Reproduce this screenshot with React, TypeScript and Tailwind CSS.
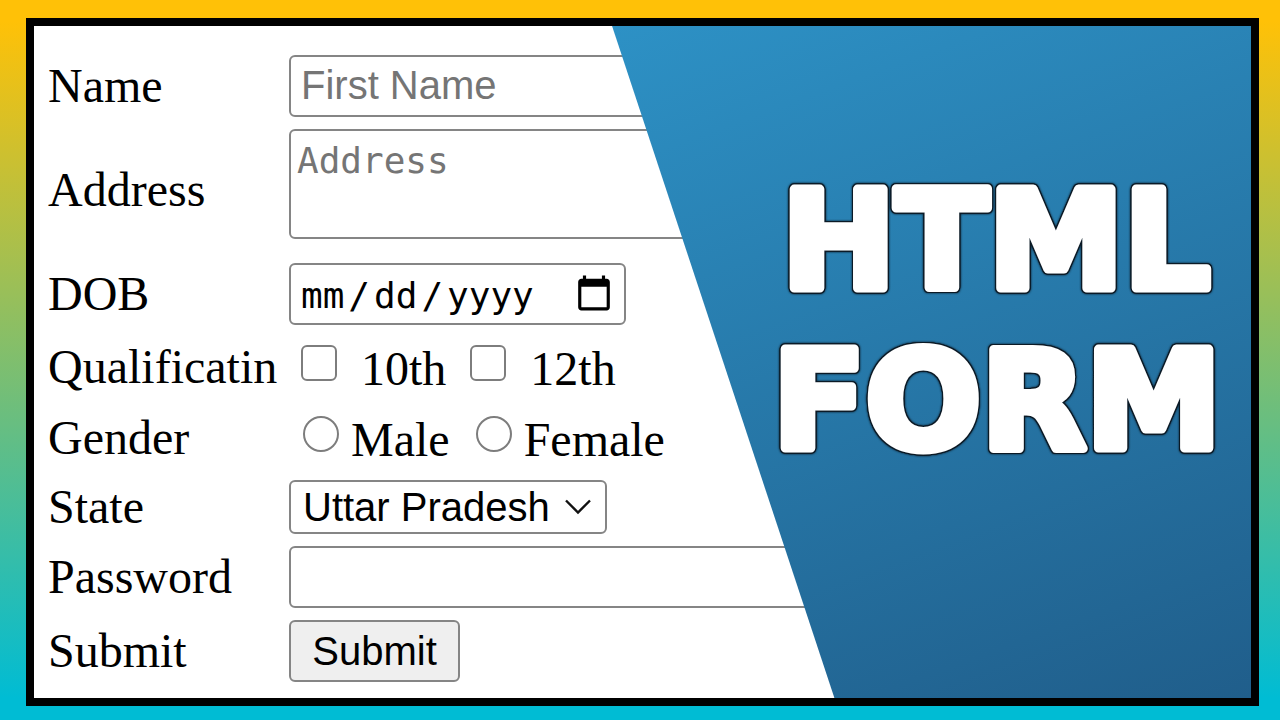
import type { ReactNode } from "react";

const box = "rounded-md border-[2px] border-[#858585] bg-white";
const sans = "font-['Liberation_Sans',Arial,sans-serif] text-[40px] leading-[46px]";
const mono = "font-['DejaVu_Sans_Mono',Consolas,monospace] text-[36px] leading-[44px]";

function Row({ id, label, className, children }: { id: string; label: string; className: string; children: ReactNode }) {
  return (
    <div className={`grid grid-cols-[241px_1fr] ${className}`}>
      <label htmlFor={id} className="self-center whitespace-nowrap">
        {label}
      </label>
      {children}
    </div>
  );
}

function Group({ label, className, children }: { label: string; className: string; children: ReactNode }) {
  return (
    <div role="group" aria-label={label} className="grid min-h-[59px] grid-cols-[241px_1fr]">
      <span className="self-center whitespace-nowrap">{label}</span>
      <div className={`flex items-center pt-1 ${className}`}>{children}</div>
    </div>
  );
}

function Choice({ type, name, label }: { type: "checkbox" | "radio"; name: string; label: string }) {
  const look = type === "checkbox" ? "rounded-md" : "rounded-full";
  const gap = type === "checkbox" ? "gap-6" : "gap-3";
  return (
    <label className={`flex items-center ${gap}`}>
      <input
        type={type}
        name={name}
        className={`mb-3 size-9 shrink-0 appearance-none border-[2px] border-[#7d7d7d] bg-white checked:bg-[#0075ff] ${look}`}
      />
      {label}
    </label>
  );
}

export default function App() {
  return (
    <div className="flex min-h-screen flex-col bg-linear-to-b/srgb from-[#ffc107] from-3% to-[#00bcd4] to-97% pt-[18px] pr-[21px] pb-[14px] pl-[26px]">
      <main className="relative flex grow flex-col overflow-hidden border-8 border-black bg-white">
        <form
          onSubmit={(e) => e.preventDefault()}
          className="flex flex-col gap-3 pt-[29px] pb-2 pl-[14px] pr-[400px] font-['Liberation_Serif','Times_New_Roman',serif] text-[48px] leading-[52px] text-black"
        >
          <Row id="name" label="Name" className="min-h-[62px]">
            <input id="name" type="text" placeholder="First Name" className={`h-[62px] w-full px-2.5 pb-0.5 placeholder:text-[#757575] ${box} ${sans}`} />
          </Row>
          <Row id="address" label="Address" className="min-h-[122px]">
            <textarea id="address" placeholder="Address" className={`h-[110px] w-full resize-none px-1.5 py-2 placeholder:text-[#757575] ${box} ${mono}`} />
          </Row>
          <Row id="dob" label="DOB" className="min-h-[62px]">
            <input
              id="dob"
              type="date"
              className={`h-[62px] w-[337px] pt-1 pr-2.5 pl-2.5 [&::-webkit-calendar-picker-indicator]:m-0 [&::-webkit-calendar-picker-indicator]:mb-1 [&::-webkit-calendar-picker-indicator]:size-10 [&::-webkit-calendar-picker-indicator]:p-0 [&::-webkit-datetime-edit-day-field]:p-0 [&::-webkit-datetime-edit-month-field]:p-0 [&::-webkit-datetime-edit-text]:px-1 [&::-webkit-datetime-edit-year-field]:p-0 ${box} ${mono}`}
            />
          </Row>
          <Group label="Qualificatin" className="gap-6 pl-3">
            <Choice type="checkbox" name="qualification" label="10th" />
            <Choice type="checkbox" name="qualification" label="12th" />
          </Group>
          <Group label="Gender" className="gap-[26px] pl-3.5">
            <Choice type="radio" name="gender" label="Male" />
            <Choice type="radio" name="gender" label="Female" />
          </Group>
          <Row id="state" label="State" className="min-h-[55px]">
            <div className="relative w-[318px]">
              <select id="state" className={`h-[54px] w-full appearance-none pl-3 ${box} ${sans}`}>
                <option>Uttar Pradesh</option>
              </select>
              <svg viewBox="0 0 26 16" className="pointer-events-none absolute top-5 right-4 h-4 w-[26px]" fill="none" stroke="#111" strokeWidth="2.4">
                <path d="M1 1.5 13 13.5 25 1.5" />
              </svg>
            </div>
          </Row>
          <Row id="password" label="Password" className="min-h-[62px]">
            <input id="password" type="password" className={`h-[62px] w-full px-2.5 ${box} ${sans}`} />
          </Row>
          <Row id="submit" label="Submit" className="min-h-[62px]">
            <button id="submit" type="submit" className={`h-[62px] w-[171px] rounded-md border-[2px] border-[#858585] bg-[#efefef] ${sans}`}>
              Submit
            </button>
          </Row>
        </form>

        <div className="absolute inset-y-0 right-0 left-[47.5%] flex flex-col bg-linear-160/srgb from-[#2d91c5] to-[#205e8b] pt-[136px] [clip-path:polygon(0_0,100%_0,100%_100%,34.8%_100%)]">
          <h1 className="ml-auto w-[500px]">
            <svg
              viewBox="0 0 500 320"
              className="w-full overflow-visible font-['DejaVu_Sans',sans-serif] text-[136px] font-bold [filter:drop-shadow(1px_0_0_#0b1a26)_drop-shadow(-1px_0_0_#0b1a26)_drop-shadow(0_1px_0_#0b1a26)_drop-shadow(0_-1px_0_#0b1a26)_drop-shadow(0_0_1px_#0b1a26)]"
              fill="#fff"
              stroke="#fff"
              strokeWidth="9"
              strokeLinejoin="round"
              textAnchor="middle"
            >
              <text x="245" y="126">HTML</text>
              <text x="246" y="286">FORM</text>
            </svg>
          </h1>
        </div>
      </main>
    </div>
  );
}
